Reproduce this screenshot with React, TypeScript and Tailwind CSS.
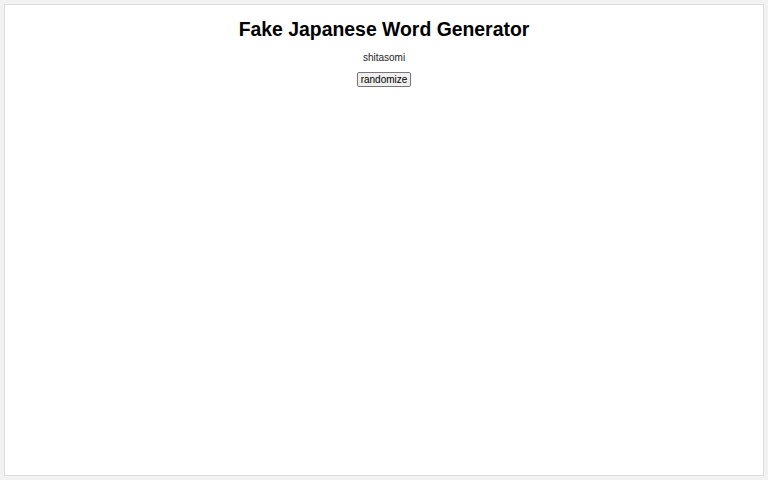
export default function App() {
  return (
    <div className="h-[480px] w-[768px] bg-[#f2f2f2] p-[4px]" style={{ fontFamily: '"Liberation Sans", Arial, sans-serif' }}>
      <div className="h-full w-full border border-[#dddddd] bg-white flex flex-col items-center">
        <h1 className="mt-[13px] text-[19.4px] leading-[22px] font-bold text-black">Fake Japanese Word Generator</h1>
        <p className="mt-[12px] text-[10px] leading-[12px] text-[#222]">shitasomi</p>
        <button className="mt-[8px] h-[15px] px-[3px] text-[10px] leading-[11px] text-black bg-[#efefef] border border-[#767676] rounded-[2px]">randomize</button>
      </div>
    </div>
  );
}
